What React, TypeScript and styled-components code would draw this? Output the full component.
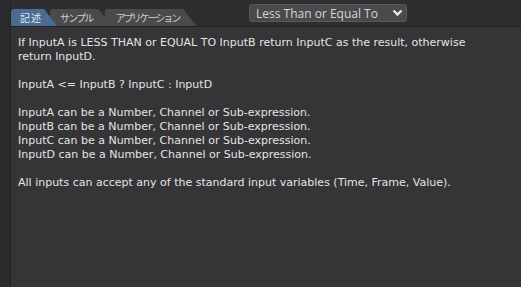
import { FC } from "react";
import styled, { createGlobalStyle } from "styled-components";

const GlobalStyle = createGlobalStyle`
  html, body {
    margin: 0;
    padding: 0;
    background: #2c2c2e;
  }
  body {
    font-family: Tahoma, "DejaVu Sans", "Noto Sans CJK JP", sans-serif;
  }
`;

// label, letter spacing (the reference font sets katakana narrow)
const tabs: [string, number][] = [
    ["記述", 1],
    ["サンプル", -1.8],
    ["アプリケーション", -2],
];

const lines: string[] = [
    "If InputA is LESS THAN or EQUAL TO InputB return InputC as the result, otherwise return InputD.",
    "",
    "InputA <= InputB ? InputC : InputD",
    "",
    "InputA can be a Number, Channel or Sub-expression.\nInputB can be a Number, Channel or Sub-expression.\nInputC can be a Number, Channel or Sub-expression.\nInputD can be a Number, Channel or Sub-expression.",
    "",
    "All inputs can accept any of the standard input variables (Time, Frame, Value).",
];

const App: FC = () => {
    return (
        <Frame>
            <GlobalStyle />
            <Gutter />
            <Main>
                <TopBar>
                    <Tabs>
                        {tabs.map(([t, sp], i) => (
                            <Tab key={t} $active={i === 0} $index={i}>
                                <TabLabel $spacing={sp}>{t}</TabLabel>
                            </Tab>
                        ))}
                    </Tabs>
                    <Select>
                        <span>Less Than or Equal To</span>
                        <svg width="11" height="8" viewBox="0 0 11 8">
                            <path d="M1.5 1.5 L5.5 5.5 L9.5 1.5" stroke="#e8e8e8" strokeWidth="2.4" fill="none" />
                        </svg>
                    </Select>
                </TopBar>
                <Panel>
                    {lines.map((l, i) => (
                        <Para key={i}>{l || "\u00a0"}</Para>
                    ))}
                </Panel>
            </Main>
        </Frame>
    );
};

const Frame = styled.div`
  display: flex;
  width: 521px;
  height: 287px;
  overflow: hidden;
  background: #2c2c2e;
`;

const Gutter = styled.div`
  width: 10px;
  flex: none;
  background: #2b2b2d;
  border-right: 1px solid #232325;
`;

const Main = styled.div`
  flex: 1;
  display: flex;
  flex-direction: column;
  min-width: 0;
`;

const TopBar = styled.div`
  height: 26px;
  flex: none;
  display: flex;
  align-items: flex-start;
  background: #2e2e30;
  border-bottom: 1px solid #222224;
  position: relative;
`;

const Tabs = styled.div`
  display: flex;
  align-self: flex-end;
`;

const padding = [
    [9, 15],
    [10, 19],
    [11, 17],
];

const Tab = styled.div<{ $active: boolean; $index: number }>`
  position: relative;
  z-index: ${p => 10 - p.$index};
  margin-left: ${p => (p.$index === 0 ? 0 : -7)}px;
  height: 17px;
  padding: 0 ${p => padding[p.$index][1]}px 0 ${p => padding[p.$index][0]}px;
  font-family: "Noto Sans CJK JP", sans-serif;
  font-size: 10px;
  line-height: 18px;
  color: ${p => (p.$active ? "#e6eef8" : "#cfcfcf")};
  background: ${p => (p.$active ? "#4b6b93" : "#4a4a4c")};
  clip-path: polygon(0 0, calc(100% - 13px) 0, 100% 100%, 0 100%);
  border-radius: 3px 0 0 0;
  white-space: nowrap;
`;

const TabLabel = styled.span<{ $spacing: number }>`
  letter-spacing: ${p => p.$spacing}px;
`;

const Select = styled.div`
  position: absolute;
  left: 238px;
  top: 4px;
  width: 158px;
  height: 18px;
  box-sizing: border-box;
  display: flex;
  align-items: center;
  justify-content: space-between;
  padding: 0 3px 0 6px;
  background: #4a4a4c;
  border: 1px solid #5a5a5c;
  border-radius: 3px;
  color: #d6d6d6;
  font-family: "Open Sans", sans-serif;
  font-size: 12px;
`;

const Panel = styled.div`
  flex: 1;
  background: #353537;
  padding: 9px 30px 0 7px;
  color: #e4e4e4;
  font-size: 11px;
  line-height: 14px;
`;

const Para = styled.div`
  white-space: pre-wrap;
`;

export default App;
